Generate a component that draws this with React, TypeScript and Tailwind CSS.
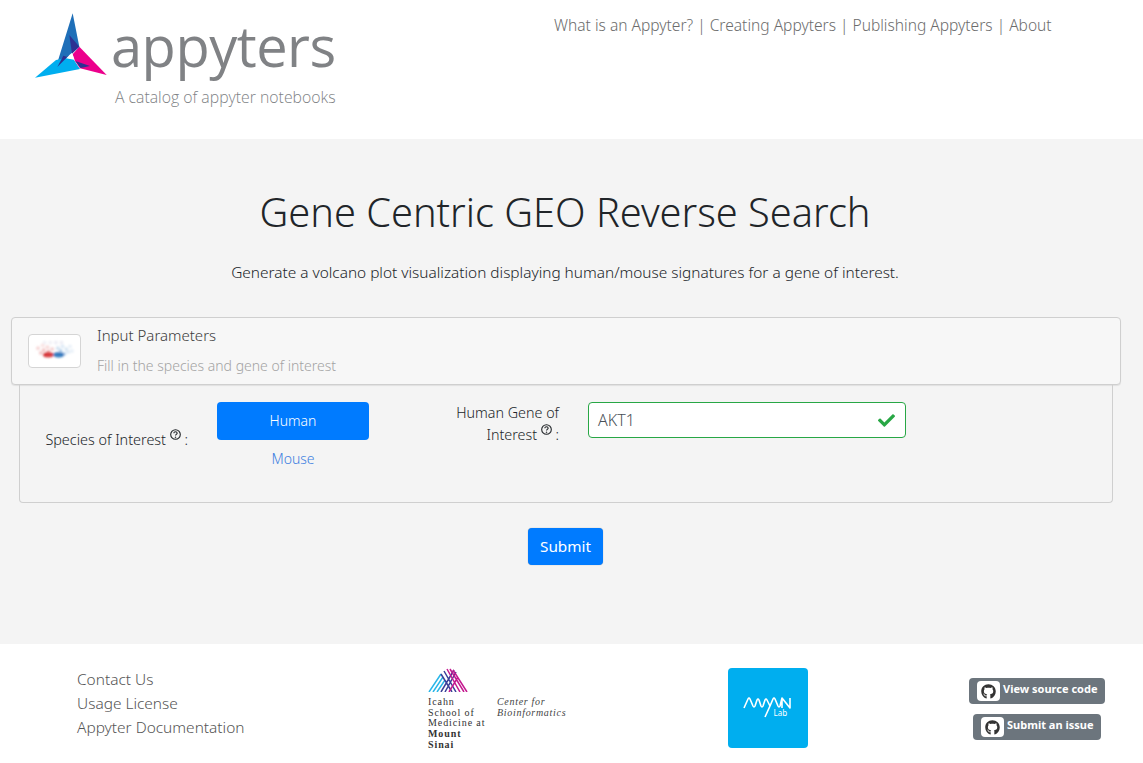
import React from "react";
import { FaGithub, FaCheck } from "react-icons/fa";

function Logo() {
  return (
    <svg viewBox="0 0 255 255" className="w-[85px] h-[85px] shrink-0" aria-hidden>
      <polygon points="128,25 148,125 118,150 100,172 78,186" fill="#1f6fb8" />
      <polygon points="15,218 78,165 110,158 130,162 150,192" fill="#00aeef" />
      <polygon points="148,125 230,210 150,190 135,168 128,148" fill="#ec008c" />
      <polygon points="118,90 148,125 126,146" fill="#2e3192" />
      <polygon points="100,152 112,156 82,186" fill="#2e3192" />
      <polygon points="136,168 180,183 152,189" fill="#2e3192" />
      <polygon points="108,160 128,148 132,164" fill="#ffffff" />
    </svg>
  );
}

function Help() {
  return (
    <svg viewBox="0 0 16 16" className="inline-block w-[11px] h-[11px] align-[5px]" fill="none" stroke="currentColor" aria-hidden>
      <circle cx="8" cy="8" r="7" strokeWidth="1.6" />
      <path d="M5.6 6.2c0-1.4 1-2.2 2.4-2.2s2.4.8 2.4 2c0 1.8-2.4 1.8-2.4 3.6" strokeWidth="1.6" />
      <circle cx="8" cy="12" r=".6" fill="currentColor" />
    </svg>
  );
}

const dots: [number, number, string][] = [
  [9, 14, "#f7d5d5"], [12, 19, "#f3c6c6"], [14, 11, "#f9e0e0"], [15, 16, "#f3c0c0"], [17, 22, "#eea8a8"],
  [19, 13, "#f7d6d6"], [20, 18, "#eea0a0"], [22, 8, "#f0f0f6"], [24, 15, "#f3cccc"], [28, 8, "#ececf4"],
  [30, 14, "#cfe0f1"], [33, 17, "#b0cfea"], [35, 12, "#dbe8f5"], [37, 20, "#bdd6ee"], [39, 15, "#d5e4f3"],
  [41, 18, "#dde9f5"], [43, 12, "#e8f0f8"], [45, 17, "#e8f0f8"], [34, 8, "#ececf4"], [16, 8, "#f0f0f6"],
];

function Volcano() {
  return (
    <div className="w-[53px] h-[34px] shrink-0 bg-white border border-[#d5d5d5] rounded flex items-center justify-center">
      <svg viewBox="0 0 53 34" className="w-[51px] h-[32px]" aria-hidden>
        <defs>
          <filter id="soft" x="-10%" y="-10%" width="120%" height="120%">
            <feGaussianBlur stdDeviation="1" />
          </filter>
        </defs>
        <g filter="url(#soft)">
          {dots.map(([x, y, c], i) => (
            <circle key={i} cx={x} cy={y} r="2" fill={c} />
          ))}
          <ellipse cx="20" cy="21" rx="6" ry="3" fill="#d4282c" opacity="0.9" />
          <ellipse cx="31" cy="21" rx="6" ry="3" fill="#1f6db8" opacity="0.9" />
        </g>
      </svg>
    </div>
  );
}

function Maayan() {
  return (
    <div className="w-20 h-20 bg-[#00aeef] rounded flex items-center justify-center">
      <div className="relative w-[50px] h-[22px] -mt-[2px] -ml-[1px]">
        <svg viewBox="0 0 50 22" className="w-[50px] h-[22px]" fill="none" stroke="#fff" strokeWidth="1.6" strokeLinejoin="round" aria-hidden>
          <path d="M1 12 5 3Q6 1 7 3l3 7Q11 12 12 10l2-6Q15 2 16 4l2 6q1 2 2 0l2-6q1-2 2 0l3 6-5 11M27 10l3-7q1-2 2 0l3 7q1 2 2 0l2-8v10M39 2l8 10V2" />
        </svg>
        <span className="absolute left-[31px] top-[13px] text-[8px] leading-[8px] text-white font-normal">Lab</span>
      </div>
    </div>
  );
}

function SinaiMark() {
  return (
    <svg viewBox="0 0 40 24" className="w-[40px] h-[24px]" fill="none" strokeWidth="1.5" aria-hidden>
      <g stroke="#29b6e8">
        <path d="M1 24 13 6M5 24 15 9M9 24 17 12" />
      </g>
      <g stroke="#3a3f98">
        <path d="M13 24 26 2M17 24 28 4M13 6l11 18M16 3l12 21" />
      </g>
      <g stroke="#c4198f">
        <path d="M19 1l13 23M22 1l14 23M25 2l14 22M21 24l9-15" />
      </g>
    </svg>
  );
}

function Badge({ label }: { label: string }) {
  return (
    <div className="h-[26px] px-2 bg-[#6c757d] rounded flex items-center gap-[3px] text-white text-[11px] font-bold whitespace-nowrap">
      <span className="w-[23px] h-[20px] bg-white rounded flex items-center justify-center text-[#333]">
        <FaGithub size={15} />
      </span>
      <span className="-mt-1">{label}</span>
    </div>
  );
}

export default function App() {
  return (
    <div className="w-[1143px] h-[763px] overflow-hidden bg-white text-[#212529] font-['Noto_Sans','Open_Sans',sans-serif] font-light flex flex-col">
      <header className="h-[139px] shrink-0 flex">
        <div className="w-[554px] pl-[30px] pt-[5px] flex">
          <Logo />
          <div className="flex flex-col items-start -ml-[4px]">
            <span className="text-[56px] leading-[72px] mt-[4px] text-[#808285] font-['Open_Sans',sans-serif] font-normal tracking-[-0.5px]">appyters</span>
            <span className="text-[15.8px] leading-5 mt-[6px] ml-[4px] text-[#808285] font-['Open_Sans',sans-serif]">A catalog of appyter notebooks</span>
          </div>
        </div>
        <nav className="pt-[14px] text-[15.55px] leading-[22px] text-[#6c6c6c] whitespace-nowrap">
          What is an Appyter? | Creating Appyters | Publishing Appyters | About
        </nav>
      </header>

      <main className="h-[505px] shrink-0 bg-[#f4f4f4] flex flex-col items-center pt-[47px] pr-[13px]">
        <h1 className="text-[39.75px] leading-[52px] font-light text-center">Gene Centric GEO Reverse Search</h1>
        <p className="mt-[23px] text-[15.4px] leading-6 text-center">Generate a volcano plot visualization displaying human/mouse signatures for a gene of interest.</p>

        <section className="self-start ml-[11px] w-[1110px] mt-[32px]">
          <div className="h-[68px] border border-[#cfcfcf] rounded bg-[#f7f7f7] flex items-center pl-4 shadow-[0_1px_1px_rgba(0,0,0,0.08)]">
            <Volcano />
            <div className="ml-4 -mt-[2px]">
              <div className="text-[15px] leading-5 text-[#3c3c3c]">Input Parameters</div>
              <div className="mt-[11px] text-sm leading-5 text-[#a3a3a3]">Fill in the species and gene of interest</div>
            </div>
          </div>
          <div className="ml-2 w-[1094px] h-[118px] border border-t-0 border-[#cfcfcf] rounded-b flex items-start">
            <div className="w-[168px] mt-[44px] text-[14.4px] leading-5 text-right whitespace-nowrap">
              Species of Interest <Help /> :
            </div>
            <div className="ml-[29px] mt-[17px] w-[152px] flex flex-col items-center">
              <div className="w-full h-[38px] rounded bg-[#007bff] text-white text-sm flex items-center justify-center">Human</div>
              <div className="mt-[9px] text-sm leading-5 text-[#3b7de0]">Mouse</div>
            </div>
            <div className="ml-[60px] mt-[17px] w-[130px] text-[14.3px] leading-[22px] text-right whitespace-nowrap">
              Human Gene of<br />Interest <Help /> :
            </div>
            <div className="ml-[29px] mt-[17px] w-[318px] h-9 bg-white border border-[#28a745] rounded flex items-center justify-between pl-[9px] pr-[10px] text-base text-[#495057]">
              <span>AKT1</span>
              <FaCheck className="text-[#28a745]" size={17} />
            </div>
          </div>
        </section>

        <button className="mt-[25px] ml-[1px] w-[75px] h-[37px] rounded bg-[#007bff] text-white text-[15.3px] font-normal shadow-[0_0_1px_rgba(0,0,0,0.4)]">Submit</button>
      </main>

      <footer className="flex-1 flex items-start">
        <div className="w-[428px] pl-[77px] pt-[23px] text-[15.45px] leading-6 text-[#555]">
          <div>Contact Us</div>
          <div>Usage License</div>
          <div>Appyter Documentation</div>
        </div>
        <div className="w-[300px] pt-[24px] flex">
          <div className="w-[69px]">
            <SinaiMark />
            <div className="font-['Liberation_Serif',serif] text-[10px] tracking-[0.9px] leading-[10.7px] font-normal text-[#333] mt-[5px] whitespace-nowrap">
              Icahn<br />School of<br />Medicine at<br /><b>Mount</b><br /><b>Sinai</b>
            </div>
          </div>
          <div className="font-['Liberation_Serif',serif] italic text-[10px] tracking-[0.7px] leading-[10.7px] font-normal text-[#444] mt-[29px] whitespace-nowrap">
            Center for<br />Bioinformatics
          </div>
        </div>
        <div className="pt-6"><Maayan /></div>
        <div className="ml-[161px] pt-[34px] flex flex-col items-center gap-[10px]">
          <Badge label="View source code" />
          <Badge label="Submit an issue" />
        </div>
      </footer>
    </div>
  );
}
